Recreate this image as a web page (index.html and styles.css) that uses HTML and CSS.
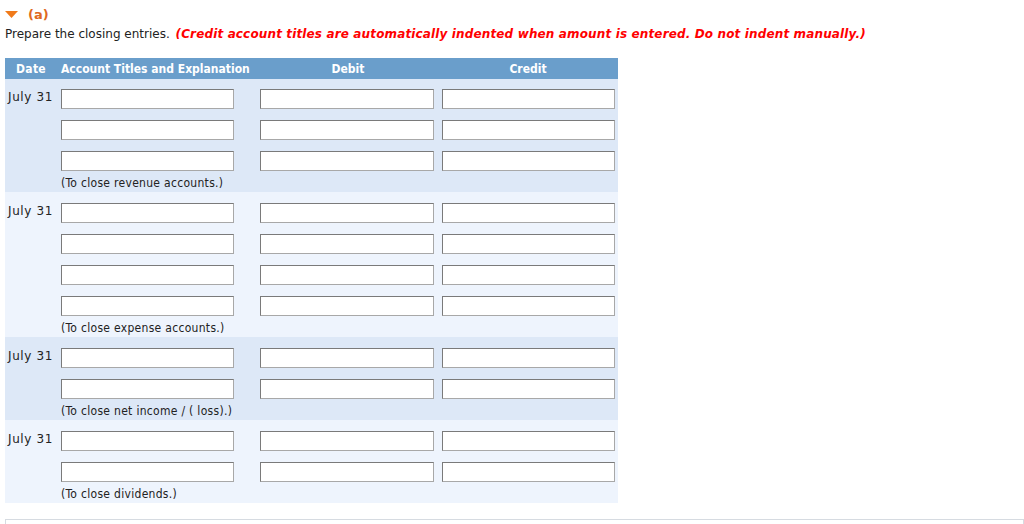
FILE: index.html
```html
<!DOCTYPE html>
<html>
<head>
<meta charset="utf-8">
<link rel="stylesheet" href="styles.css">
</head>
<body>
<div class="page">
  <div class="part-title">
    <svg class="caret" width="13" height="7" viewBox="0 0 13 7"><polygon points="0,0 13,0 6.5,7" fill="#f07a1a"/></svg>
    <span class="part-label">(a)</span>
  </div>
  <p class="instructions">Prepare the closing entries. <span class="warn">(Credit account titles are automatically indented when amount is entered. Do not indent manually.)</span></p>

  <div class="journal">
    <div class="jrow head">
      <div class="c-date">Date</div>
      <div class="c-acct">Account Titles and Explanation</div>
      <div class="c-debit">Debit</div>
      <div class="c-credit">Credit</div>
    </div>

    <div class="entry dark first">
      <div class="jrow"><div class="c-date">July 31</div><div class="c-acct"><input class="in-acct"></div><div class="c-debit"><input class="in-debit"></div><div class="c-credit"><input class="in-credit"></div></div>
      <div class="jrow"><div class="c-date"></div><div class="c-acct"><input class="in-acct"></div><div class="c-debit"><input class="in-debit"></div><div class="c-credit"><input class="in-credit"></div></div>
      <div class="jrow"><div class="c-date"></div><div class="c-acct"><input class="in-acct"></div><div class="c-debit"><input class="in-debit"></div><div class="c-credit"><input class="in-credit"></div></div>
      <div class="memo">(To close revenue accounts.)</div>
    </div>

    <div class="entry light">
      <div class="jrow"><div class="c-date">July 31</div><div class="c-acct"><input class="in-acct"></div><div class="c-debit"><input class="in-debit"></div><div class="c-credit"><input class="in-credit"></div></div>
      <div class="jrow"><div class="c-date"></div><div class="c-acct"><input class="in-acct"></div><div class="c-debit"><input class="in-debit"></div><div class="c-credit"><input class="in-credit"></div></div>
      <div class="jrow"><div class="c-date"></div><div class="c-acct"><input class="in-acct"></div><div class="c-debit"><input class="in-debit"></div><div class="c-credit"><input class="in-credit"></div></div>
      <div class="jrow"><div class="c-date"></div><div class="c-acct"><input class="in-acct"></div><div class="c-debit"><input class="in-debit"></div><div class="c-credit"><input class="in-credit"></div></div>
      <div class="memo">(To close expense accounts.)</div>
    </div>

    <div class="entry dark">
      <div class="jrow"><div class="c-date">July 31</div><div class="c-acct"><input class="in-acct"></div><div class="c-debit"><input class="in-debit"></div><div class="c-credit"><input class="in-credit"></div></div>
      <div class="jrow"><div class="c-date"></div><div class="c-acct"><input class="in-acct"></div><div class="c-debit"><input class="in-debit"></div><div class="c-credit"><input class="in-credit"></div></div>
      <div class="memo">(To close net income / ( loss).)</div>
    </div>

    <div class="entry light">
      <div class="jrow"><div class="c-date">July 31</div><div class="c-acct"><input class="in-acct"></div><div class="c-debit"><input class="in-debit"></div><div class="c-credit"><input class="in-credit"></div></div>
      <div class="jrow"><div class="c-date"></div><div class="c-acct"><input class="in-acct"></div><div class="c-debit"><input class="in-debit"></div><div class="c-credit"><input class="in-credit"></div></div>
      <div class="memo">(To close dividends.)</div>
    </div>
  </div>

  <div class="next-box"></div>
</div>
</body>
</html>
```

FILE: styles.css
```css
* { box-sizing: border-box; }
html, body { margin: 0; padding: 0; background: #fff; overflow: hidden; }
body {
  font-family: "DejaVu Sans", Verdana, sans-serif;
  font-size: 12px;
  color: #222;
}
.page { padding: 6px 0 0 5px; }
.part-title {
  display: flex;
  align-items: center;
  gap: 10px;
  height: 16px;
}
.caret { display: block; }
.part-label {
  font-weight: bold;
  color: #e0691e;
  font-size: 13px;
}
.instructions {
  margin: 4px 0 0 0;
  line-height: 16px;
  color: #222;
}
.warn {
  color: #ff0000;
  font-weight: bold;
  font-style: italic;
  letter-spacing: 0.14px;
  margin-left: 2px;
}
.journal {
  width: 613px;
  margin-top: 16px;
}
.jrow {
  display: grid;
  grid-template-columns: 56px 199px 182px 176px;
  align-items: start;
}
.head {
  font-family: "DejaVu Sans Condensed", "DejaVu Sans", sans-serif;
  background: #6a9ecb;
  color: #fff;
  font-weight: bold;
  height: 21px;
  align-items: center;
}
.head .c-date { text-align: center; padding-left: 0; padding-right: 4px; letter-spacing: 0.3px; }
.head .c-debit { text-align: center; padding-right: 6px; }
.head .c-credit { text-align: center; padding-right: 4px; }
.c-date { padding-left: 3px; letter-spacing: 0.6px; }
.entry {
  display: flex;
  flex-direction: column;
  gap: 11px;
  padding-top: 11px;
  padding-bottom: 0;
}
.entry.first { padding-top: 10px; }
.entry .jrow { height: 20px; }
.entry .c-date { line-height: 16px; padding-top: 0; }
.dark { background: #dde8f7; }
.light { background: #eef4fd; }
input {
  display: block;
  height: 20px;
  margin: 0;
  padding: 0 3px;
  background: #fff;
  border: 1px solid #a8a8a8;
  border-top-color: #7a7a7a;
  border-left-color: #7a7a7a;
  font: inherit;
}
.in-acct { width: 173px; }
.in-debit { width: 174px; }
.in-credit { width: 173px; }
.memo {
  font-family: "DejaVu Sans Condensed", "DejaVu Sans", sans-serif;
  margin-left: 56px;
  margin-top: -7px;
  line-height: 17px;
  font-size: 12px;
  letter-spacing: 0.3px;
}
.next-box {
  margin-top: 16px;
  height: 20px;
  border: 1px solid #d6dbe1;
  border-bottom: none;
}
```
